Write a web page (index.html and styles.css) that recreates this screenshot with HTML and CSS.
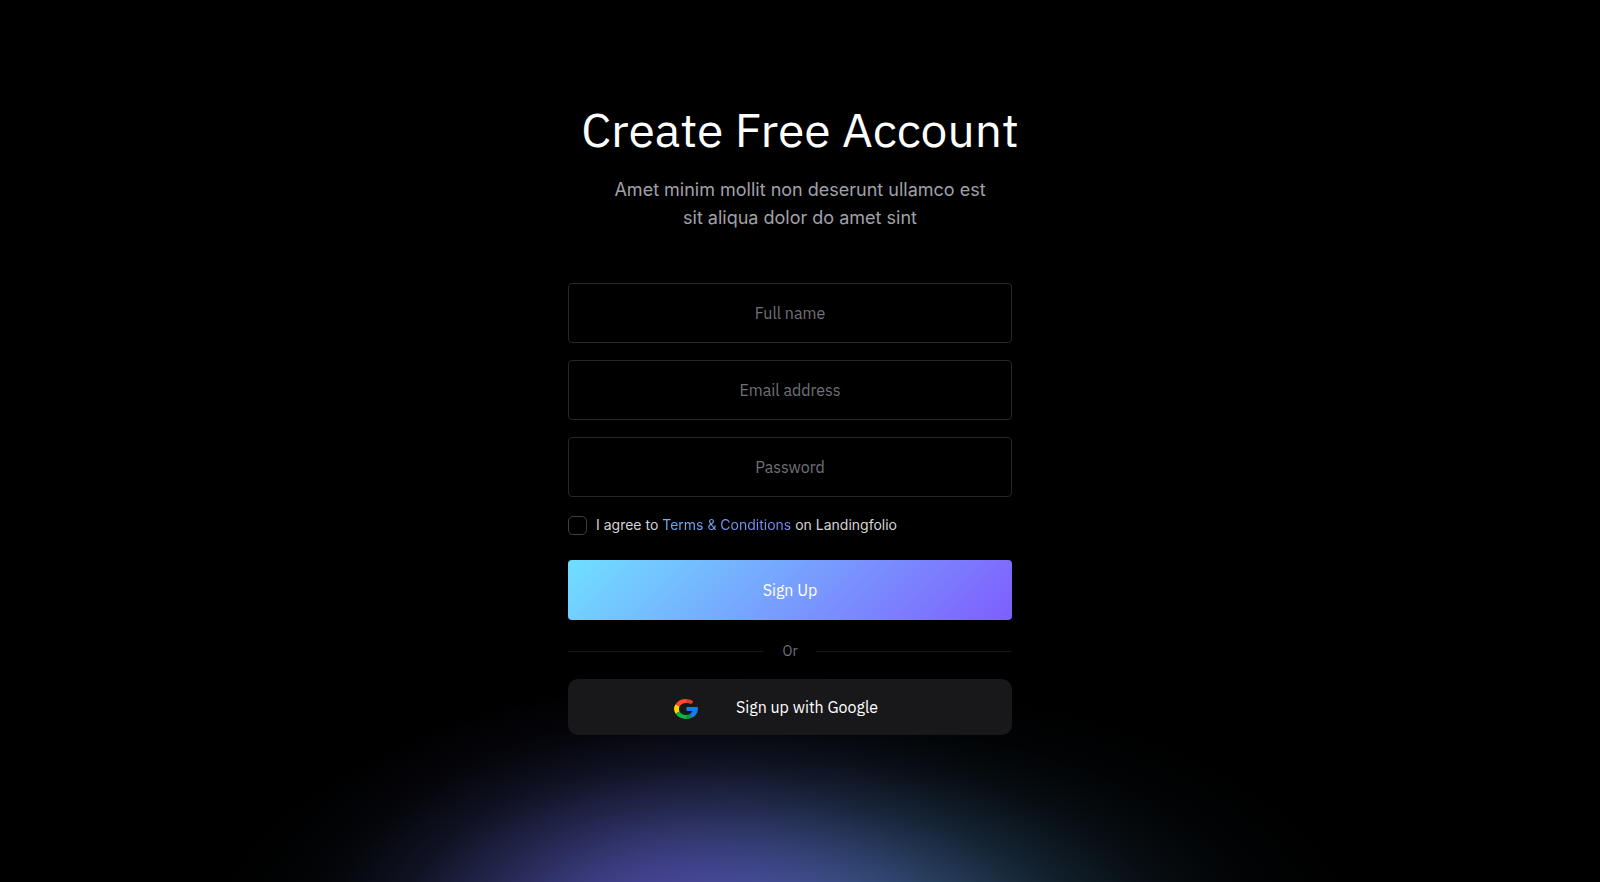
FILE: index.html
```html
<!DOCTYPE html>
<html lang="en">
<head>
    <meta charset="UTF-8">
    <meta name="viewport" content="width=device-width, initial-scale=1.0">
    <title>Create Free Account</title>
    <link rel="stylesheet" href="styles.css">
</head>
<body>
    <main class="signup">
        <header class="header">
            <h1>Create Free Account</h1>
            <p>Amet minim mollit non deserunt ullamco est sit aliqua dolor do amet sint</p>
        </header>

        <form class="signup-form" action="#" method="POST">
            <input type="text" name="name" class="field" placeholder="Full name" aria-label="Full name">
            <input type="email" name="email" class="field" placeholder="Email address" aria-label="Email address">
            <input type="password" name="password" class="field" placeholder="Password" aria-label="Password">

            <div class="terms">
                <input type="checkbox" id="terms" name="terms" class="checkbox">
                <label for="terms">I agree to <a href="#">Terms &amp; Conditions</a> on Landingfolio</label>
            </div>

            <button type="submit" class="btn btn-primary">Sign Up</button>

            <div class="divider"><span>Or</span></div>

            <button type="button" class="btn btn-google">
                <svg class="google-icon" viewBox="0 -4 24 24" aria-hidden="true">
                    <path d="M1.6 5.2A12 10 0 0 0 1.6 14.8L5.6 12.4A7.4 6 0 0 1 5.6 7.6Z" fill="#ffd500"/>
                    <path d="M1.6 5.2A12 10 0 0 1 12 0V4A7.4 6 0 0 0 5.6 7.6Z" fill="#ff4b26"/>
                    <path d="M12 0A12 10 0 0 1 18.6 1.8Q19.6 2.6 18.8 3.6Q17.6 5.4 16.2 4.8A7.4 6 0 0 0 12 4Z" fill="#d93f21"/>
                    <path d="M1.6 14.8A12 10 0 0 0 12 20V16A7.4 6 0 0 1 5.6 12.4Z" fill="#12b347"/>
                    <path d="M12 20A12 10 0 0 0 18 18.7L15.6 15.2A7.4 6 0 0 1 12 16Z" fill="#0f993e"/>
                    <path d="M13.2 8H23.8Q24.2 10.4 23.2 13.4Q21.6 17.2 18 18.7L15.6 15.2Q18 13.9 18.4 12H13.2Q12.4 12 12.4 11.2V8.8Q12.4 8 13.2 8Z" fill="#167ee6"/>
                </svg>
                <span>Sign up with Google</span>
            </button>
        </form>
    </main>
</body>
</html>
```
FILE: styles.css
```css
:root {
    --text-color: #ffffff;
    --muted-color: #a1a1aa;
    --placeholder-color: #71717a;
    --border-color: #27272a;
    --heading-font: "IBM Plex Sans", "Open Sans", sans-serif;
    --body-font: Inter, sans-serif;
}

* {
    margin: 0;
    padding: 0;
    box-sizing: border-box;
}

/* purple and blue glow rising from the bottom edge */
body {
    min-height: 100vh;
    font-family: var(--body-font);
    color: var(--text-color);
    background:
        radial-gradient(ellipse 410px 260px at 42% 106%,
            rgba(88, 66, 180, 0.76) 0%,
            rgba(88, 66, 180, 0.66) 17%,
            rgba(88, 66, 180, 0.46) 33%,
            rgba(88, 66, 180, 0.25) 50%,
            rgba(88, 66, 180, 0.1) 67%,
            rgba(88, 66, 180, 0.03) 83%,
            rgba(88, 66, 180, 0) 100%),
        radial-gradient(ellipse 580px 260px at 49% 106%,
            rgba(54, 100, 136, 1) 0%,
            rgba(54, 100, 136, 0.88) 17%,
            rgba(54, 100, 136, 0.61) 33%,
            rgba(54, 100, 136, 0.33) 50%,
            rgba(54, 100, 136, 0.13) 67%,
            rgba(54, 100, 136, 0.03) 83%,
            rgba(54, 100, 136, 0) 100%),
        #000000;
}

.signup {
    max-width: 478px;
    margin: 0 auto;
    padding: 100px 16px 40px;
}

.header {
    text-align: center;
}

.header h1 {
    font-family: var(--heading-font);
    font-size: 48px;
    font-weight: 400;
    line-height: 58px;
    white-space: nowrap;
}

.header p {
    max-width: 384px;
    margin: 18px auto 0;
    font-size: 18px;
    line-height: 28px;
    color: var(--muted-color);
}

.signup-form {
    margin: 51px 11px 0 -9px;
}

.field {
    display: block;
    width: 100%;
    height: 60px;
    margin-bottom: 17px;
    padding: 0 24px;
    font-family: var(--heading-font);
    font-size: 16px;
    text-align: center;
    color: var(--text-color);
    background: #000000;
    border: 1px solid var(--border-color);
    border-radius: 4px;
}

.field::placeholder {
    color: var(--placeholder-color);
    opacity: 1;
}

.field:focus {
    outline: none;
    border-color: #70dbff;
}

.terms {
    display: flex;
    align-items: flex-start;
    gap: 9px;
    margin: 19px 0 25px;
    font-size: 14px;
    line-height: 17px;
    color: #d4d4d8;
}

.checkbox {
    width: 19px;
    height: 19px;
    appearance: none;
    border: 1px solid #3f3f46;
    border-radius: 5px;
}

.checkbox:checked {
    background: #7f5efd;
}

.terms a {
    color: transparent;
    text-decoration: none;
    background: linear-gradient(90deg, #68b5f5 0%, #7d83f5 100%);
    background-clip: text;
}

.btn {
    display: flex;
    align-items: center;
    justify-content: center;
    width: 100%;
    font-family: var(--heading-font);
    font-size: 16px;
    color: var(--text-color);
    border: none;
    cursor: pointer;
}

.btn-primary {
    height: 60px;
    background: linear-gradient(135deg, #70dfff 0%, #7f5efd 100%);
    border-radius: 4px;
}

.divider {
    display: flex;
    align-items: center;
    gap: 18px;
    margin: 21px 0 18px;
    font-family: var(--heading-font);
    font-size: 14px;
    line-height: 20px;
    color: var(--placeholder-color);
}

.divider::before,
.divider::after {
    content: "";
    flex: 1;
    height: 1px;
    background: #18181b;
}

.btn-google {
    height: 56px;
    gap: 38px;
    padding-right: 28px;
    background: #18181b;
    border-radius: 10px;
}

.google-icon {
    width: 24px;
    height: 24px;
}
```
